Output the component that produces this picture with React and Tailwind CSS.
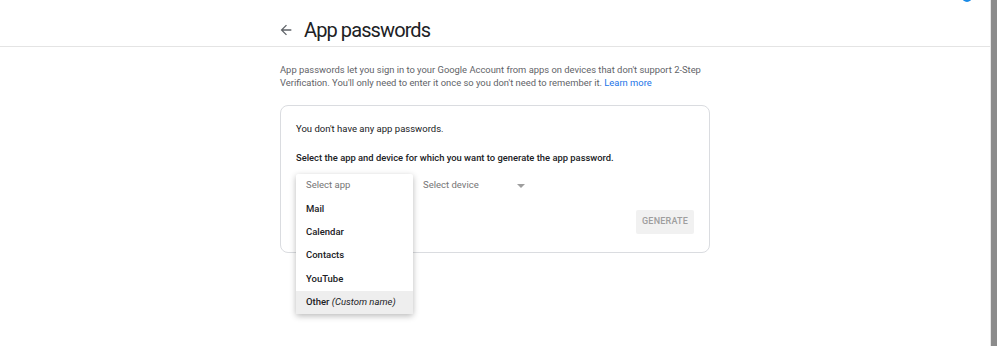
import React from "react";

export default function App() {
  const items = ["Mail", "Calendar", "Contacts", "YouTube"];
  return (
    <div className="relative w-[1000px] h-[346px] bg-white overflow-hidden" style={{ fontFamily: "Roboto, Arial, sans-serif" }}>
      {/* avatar edge */}
      <div className="absolute left-[962px] top-[-8px] w-[10px] h-[10px] rounded-full bg-[#1a8ae6]" />
      {/* scrollbar */}
      <div className="absolute right-0 top-0 h-full w-[10px] flex bg-white">
        <div className="w-[1px] bg-[#e6e6e6]" />
        <div className="w-[6px] bg-[#8c8c8c]" />
      </div>
      <div className="w-[990px]">
        <div className="h-[47px] border-b border-[#e4e4e4] flex items-center pl-[278px] pt-[14px] pb-[1px]">
          <svg width="16" height="16" viewBox="0 0 24 24" className="text-[#5f6368]">
            <path d="M20 11H7.83l5.59-5.59L12 4l-8 8 8 8 1.41-1.41L7.83 13H20v-2z" fill="currentColor" />
          </svg>
          <div className="ml-[10px] text-[20px] tracking-[-0.9px] text-[#202124] leading-none">App passwords</div>
        </div>
        <div className="pl-[280px] w-[960px]">
          <p className="mt-[16px] text-[9.4px] leading-[13px] text-[#5f6368] w-[445px]">
            App passwords let you sign in to your Google Account from apps on devices that don't support 2-Step Verification. You'll only need to enter it once so you don't need to remember it.{" "}
            <span className="text-[#1a73e8]">Learn more</span>
          </p>
          <div className="mt-[16px] w-[430px] h-[148px] border border-[#dadce0] rounded-[8px] px-[15px] pt-[16px] relative">
            <div className="text-[9.5px] leading-[13px] text-[#202124]">You don't have any app passwords.</div>
            <div className="mt-[16px] text-[9.4px] leading-[13px] text-[#202124] font-medium">Select the app and device for which you want to generate the app password.</div>
            <div className="mt-[10px] flex items-start">
              <div className="relative z-10 w-[117px] bg-white shadow-[0_2px_6px_rgba(0,0,0,0.28)] rounded-[2px] text-[9.5px]">
                <div className="h-[23px] flex items-center px-[10px] text-[#757575]">Select app</div>
                {items.map((t) => (
                  <div key={t} className="h-[23.4px] flex items-center px-[10px] text-[#202124] font-medium">{t}</div>
                ))}
                <div className="h-[23.4px] flex items-center px-[10px] text-[#202124] font-medium bg-[#eeeeee]">
                  Other&nbsp;<span className="italic font-normal">(Custom name)</span>
                </div>
              </div>
              <div className="ml-[10px] w-[102px] h-[23px] flex items-center justify-between text-[9.5px] text-[#757575]">
                <span>Select device</span>
                <svg width="8" height="4" viewBox="0 0 8 4"><path d="M0 0h8L4 4z" fill="#9e9e9e" /></svg>
              </div>
            </div>
            <div className="absolute right-[15px] top-[104px] w-[58px] h-[24px] bg-[#f1f1f1] rounded-[2px] flex items-center justify-center text-[9px] font-medium text-[#9e9e9e] tracking-[0.2px]">GENERATE</div>
          </div>
        </div>
      </div>
    </div>
  );
}
